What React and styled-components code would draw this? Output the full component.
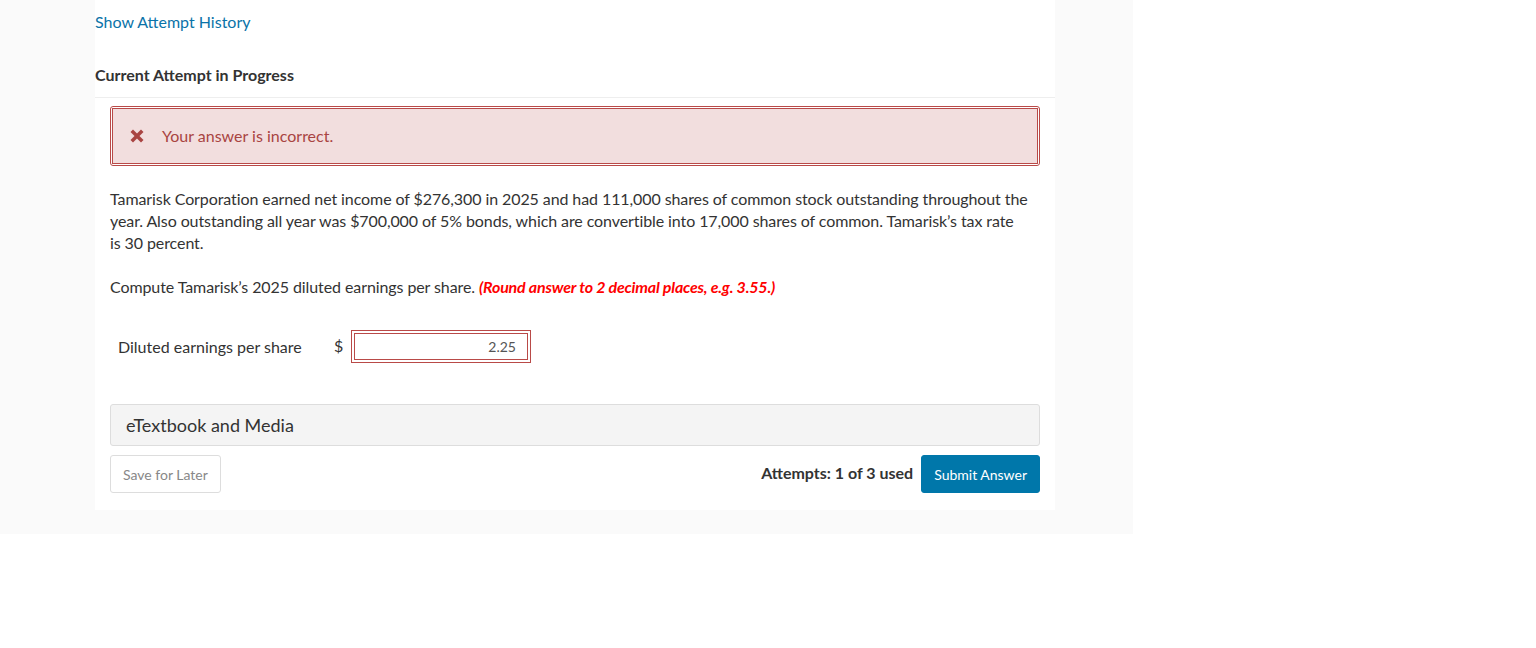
import React from "react";
import styled, { createGlobalStyle } from "styled-components";

const Global = createGlobalStyle`
  html, body { margin: 0; padding: 0; background: #fff; }
  body { font-family: Lato, "Open Sans", "Liberation Sans", sans-serif; color: #333; }
  * { box-sizing: border-box; }
`;

const Page = styled.div`
  width: 1133px;
  height: 534px;
  background: #fafafa;
  padding-left: 95px;
`;

const Panel = styled.div`
  width: 960px;
  height: 510px;
  background: #fff;
  display: flex;
  flex-direction: column;
`;

const HistoryLink = styled.a`
  display: block;
  font-size: 16px;
  line-height: 20px;
  color: #0a73a8;
  margin-top: 12px;
  text-decoration: none;
  cursor: pointer;
`;

const SectionTitle = styled.h2`
  margin: 33px 0 0;
  font-size: 16px;
  line-height: 20px;
  font-weight: 700;
  color: #333;
  padding-bottom: 12px;
  border-bottom: 1px solid #eee;
`;

const Body = styled.div`
  padding: 0 15px;
  display: flex;
  flex-direction: column;
`;

const Alert = styled.div`
  margin-top: 8px;
  height: 60px;
  border: 1px solid #b94a48;
  border-radius: 3px;
  padding: 1px;
  background: #fff;
`;

const AlertInner = styled.div`
  height: 100%;
  border: 1px solid #b94a48;
  background: #f2dede;
  color: #a94442;
  display: flex;
  align-items: center;
  padding-left: 16px;
  gap: 17px;
  font-size: 16px;
  padding-bottom: 1px;
`;

const Paragraph = styled.p`
  margin: ${(p) => p.$top}px 0 0;
  padding-right: 12px;
  font-size: 16px;
  line-height: 22px;
  color: #333;
  letter-spacing: -0.09px;
`;

const Hint = styled.em`
  color: #ff0000;
  font-weight: 700;
  font-style: italic;
  letter-spacing: -0.2px;
`;

const AnswerRow = styled.div`
  margin-top: 32px;
  display: flex;
  align-items: center;
  padding-left: 8px;
  height: 33px;
`;

const Label = styled.span`
  font-size: 16px;
  width: 216px;
  color: #333;
`;

const Currency = styled.span`
  font-size: 16px;
  width: 17px;
  color: #333;
  margin-top: -2px;
`;

const InputFrame = styled.div`
  width: 180px;
  height: 33px;
  border: 1px solid #b94a48;
  padding: 2px;
`;

const Input = styled.input`
  width: 100%;
  height: 100%;
  border: 1px solid #b94a48;
  text-align: right;
  font-family: inherit;
  font-size: 14px;
  color: #555;
  padding: 0 11px;
  outline: none;
`;

const MediaBar = styled.div`
  margin-top: 41px;
  height: 42px;
  background: #f4f4f4;
  border: 1px solid #ddd;
  border-radius: 3px;
  display: flex;
  align-items: center;
  padding-left: 15px;
  font-size: 18px;
  color: #333;
`;

const Footer = styled.div`
  margin-top: 9px;
  display: flex;
  align-items: center;
`;

const Spacer = styled.div`
  flex: 1;
`;

const Button = styled.button`
  height: 38px;
  padding: 0 12px;
  border-radius: 3px;
  font-family: inherit;
  font-size: 14px;
  cursor: pointer;
  border: 1px solid ${(p) => (p.$primary ? "#0077aa" : "#ddd")};
  background: ${(p) => (p.$primary ? "#0077aa" : "#fff")};
  color: ${(p) => (p.$primary ? "#fff" : "#888")};
`;

const Attempts = styled.span`
  font-size: 16px;
  font-weight: 700;
  color: #333;
  margin-right: 8px;
  margin-top: -4px;
`;

const XIcon = () => (
  <svg width="16" height="16" viewBox="0 0 16 16" aria-hidden="true">
    <path
      d="M1.5 4 L4 1.5 L8 5.5 L12 1.5 L14.5 4 L10.5 8 L14.5 12 L12 14.5 L8 10.5 L4 14.5 L1.5 12 L5.5 8 Z"
      fill="#a94442"
    />
  </svg>
);

export default function App() {
  return (
    <>
      <Global />
      <Page>
        <Panel>
          <HistoryLink>Show Attempt History</HistoryLink>
          <SectionTitle>Current Attempt in Progress</SectionTitle>
          <Body>
            <Alert>
              <AlertInner>
                <XIcon />
                <span>Your answer is incorrect.</span>
              </AlertInner>
            </Alert>
            <Paragraph $top={22}>
              Tamarisk Corporation earned net income of $276,300 in 2025 and had 111,000 shares of common stock outstanding throughout the year. Also outstanding all year was $700,000 of 5% bonds, which are convertible into 17,000 shares of common. Tamarisk’s tax rate is 30 percent.
            </Paragraph>
            <Paragraph $top={22}>
              Compute Tamarisk’s 2025 diluted earnings per share.{" "}
              <Hint>(Round answer to 2 decimal places, e.g. 3.55.)</Hint>
            </Paragraph>
            <AnswerRow>
              <Label>Diluted earnings per share</Label>
              <Currency>$</Currency>
              <InputFrame>
                <Input defaultValue="2.25" />
              </InputFrame>
            </AnswerRow>
            <MediaBar>eTextbook and Media</MediaBar>
            <Footer>
              <Button>Save for Later</Button>
              <Spacer />
              <Attempts>Attempts: 1 of 3 used</Attempts>
              <Button $primary>Submit Answer</Button>
            </Footer>
          </Body>
        </Panel>
      </Page>
    </>
  );
}
